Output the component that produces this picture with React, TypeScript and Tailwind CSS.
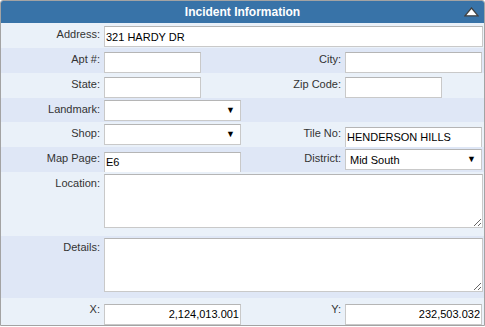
import React from 'react'

const font = { fontFamily: '"Liberation Sans", Arial, sans-serif' }

const Label = ({ children }: { children?: React.ReactNode }) => (
  <div className="pr-[4px] pt-[5px] text-right text-[11px] leading-[13px] text-[#333]">{children}</div>
)

const TextBox = ({ value = '', w, right = false }: { value?: string; w: string; right?: boolean }) => (
  <input
    readOnly
    value={value}
    className={`${w} h-[21px] border border-[#c9c9c9] border-t-[#b5b5b5] bg-white px-[1px] text-[11px] text-black outline-none ${right ? 'text-right' : ''}`}
    style={font}
  />
)

const Select = ({ value = '' }: { value?: string }) => (
  <div className="flex h-[21px] w-[137px] items-center justify-between border border-[#c9c9c9] border-t-[#b5b5b5] bg-white pl-[4px] pr-[5px] text-[11px] text-black">
    <span>{value}</span>
    <span className="text-[9px] leading-none">▼</span>
  </div>
)

const Area = () => (
  <textarea
    readOnly
    className="block h-[54px] w-[379px] resize border border-[#c9c9c9] border-t-[#b5b5b5] bg-white outline-none"
  />
)

const light = 'bg-[#eaf1f9]'
const dark = 'bg-[#dfe7f6]'

export default function App() {
  return (
    <div className="w-[485px] h-[327px] bg-white" style={font}>
      <div className="flex h-[326px] flex-col border border-[#a3a3a3] rounded-t-[3px] overflow-hidden">
        <div className="relative flex h-[22px] items-center justify-center bg-[#3873a8] text-[12px] font-bold text-white">
          Incident Information
          <svg className="absolute right-[5px] top-[6px]" width="15" height="10" viewBox="0 0 15 10">
            <polygon points="7.5,1 14,8.8 1,8.8" fill="#fff" stroke="#404040" strokeWidth="1.2" />
          </svg>
        </div>

        <div className={`grid h-[25px] grid-cols-[103px_1fr] ${light}`}>
          <Label>Address:</Label>
          <div className="pt-[1px]"><TextBox value="321 HARDY DR" w="w-[379px]" /></div>
        </div>

        <div className={`grid h-[25px] grid-cols-[103px_136px_105px_1fr] ${dark}`}>
          <Label>Apt #:</Label>
          <div className="pt-[2px]"><TextBox w="w-[97px]" /></div>
          <Label>City:</Label>
          <div className="pt-[2px]"><TextBox w="w-[137px]" /></div>
        </div>

        <div className={`grid h-[25px] grid-cols-[103px_136px_105px_1fr] ${light}`}>
          <Label>State:</Label>
          <div className="pt-[2px]"><TextBox w="w-[97px]" /></div>
          <Label>Zip Code:</Label>
          <div className="pt-[2px]"><TextBox w="w-[97px]" /></div>
        </div>

        <div className={`grid h-[25px] grid-cols-[103px_1fr] ${dark}`}>
          <Label>Landmark:</Label>
          <div className="pt-[2px]"><Select /></div>
        </div>

        <div className={`grid h-[25px] grid-cols-[103px_136px_105px_1fr] ${light}`}>
          <Label>Shop:</Label>
          <div className="pt-[2px]"><Select /></div>
          <Label>Tile No:</Label>
          <div className="pt-[2px]"><TextBox value="HENDERSON HILLS" w="w-[137px]" /></div>
        </div>

        <div className={`grid h-[25px] grid-cols-[103px_136px_105px_1fr] ${dark}`}>
          <Label>Map Page:</Label>
          <div className="pt-[2px]"><TextBox value="E6" w="w-[137px]" /></div>
          <Label>District:</Label>
          <div className="pt-[2px]"><Select value="Mid South" /></div>
        </div>

        <div className={`grid h-[64px] grid-cols-[103px_1fr] ${light}`}>
          <Label>Location:</Label>
          <div className="pt-[2px]"><Area /></div>
        </div>

        <div className={`grid h-[63px] grid-cols-[103px_1fr] ${dark}`}>
          <Label>Details:</Label>
          <div className="pt-[2px]"><Area /></div>
        </div>

        <div className={`grid flex-1 grid-cols-[103px_136px_105px_1fr] ${light}`}>
          <Label>X:</Label>
          <div className="pt-[3px]"><TextBox value="2,124,013.001" w="w-[137px]" right /></div>
          <Label>Y:</Label>
          <div className="pt-[3px]"><TextBox value="232,503.032" w="w-[137px]" right /></div>
        </div>
      </div>
    </div>
  )
}
